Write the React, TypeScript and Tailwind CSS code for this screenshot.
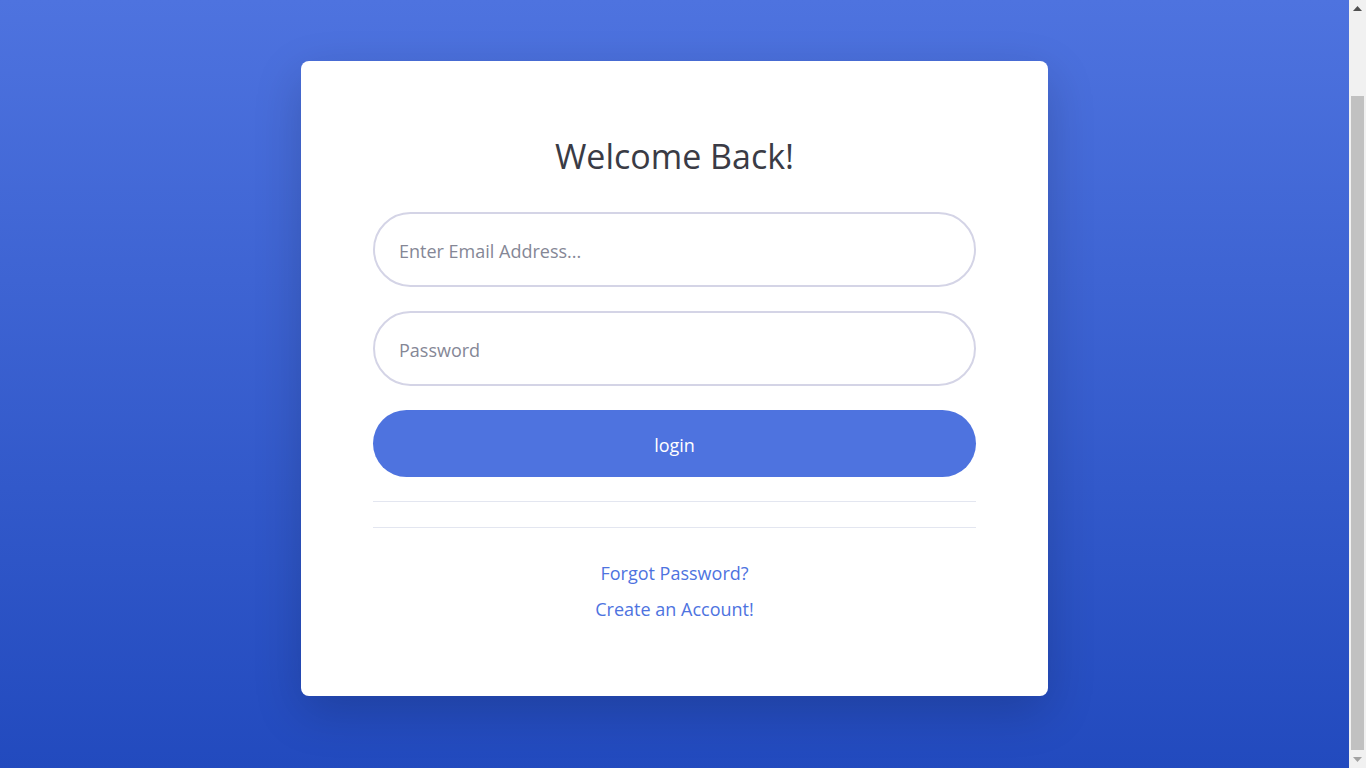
import React from "react";

function FakeScrollbar() {
  return (
    <div className="flex w-[17px] shrink-0 flex-col bg-[#f1f1f1]">
      <div className="flex h-[17px] items-center justify-center">
        <svg width="9" height="5" viewBox="0 0 9 5">
          <polygon points="0,5 4.5,0 9,5" fill="#505050" />
        </svg>
      </div>
      <div className="flex-1 pt-[79px] pb-[1px] px-[2px]">
        <div className="h-full w-full bg-[#c1c1c1]" />
      </div>
      <div className="flex h-[17px] items-center justify-center">
        <svg width="9" height="5" viewBox="0 0 9 5">
          <polygon points="0,0 4.5,5 9,0" fill="#a3a3a3" />
        </svg>
      </div>
    </div>
  );
}

export default function App() {
  return (
    <div
      className="flex h-screen overflow-hidden"
      style={{ fontFamily: '"Open Sans", "Noto Sans", sans-serif' }}
    >
      <main className="flex-1 bg-[linear-gradient(180deg,#4e73df_0%,#224abe_100%)] pt-[61px]">
        <div className="mx-auto w-[747px] h-[635px] rounded-lg bg-white shadow-[0_1rem_3rem_rgba(0,0,0,0.175)] px-[72px] pt-[74px]">
          <h1 className="text-center text-[34px] leading-[42px] text-[#3a3b45] font-normal">
            Welcome Back!
          </h1>
          <form className="mt-[35px] flex flex-col gap-6" onSubmit={(e) => e.preventDefault()}>
            <input
              type="email"
              placeholder="Enter Email Address..."
              className="h-[75px] w-full rounded-full border-2 border-[#d4d4e6] pl-[24px] pr-[24px] pt-[3px] text-[18px] text-[#6e707e] placeholder:text-[#858796] outline-none"
            />
            <input
              type="password"
              placeholder="Password"
              className="h-[75px] w-full rounded-full border-2 border-[#d4d4e6] pl-[24px] pr-[24px] pt-[3px] text-[18px] text-[#6e707e] placeholder:text-[#858796] outline-none"
            />
            <button
              type="submit"
              className="h-[67px] w-full rounded-full bg-[#4e73df] pt-[3px] text-[18px] text-white"
            >
              login
            </button>
          </form>
          <hr className="mt-6 border-t border-[#e3e6f0]" />
          <hr className="mt-[25px] border-t border-[#e3e6f0]" />
          <div className="mt-[33px] text-center text-[18px] leading-[24px]">
            <a href="#" className="text-[#4e73df]">Forgot Password?</a>
          </div>
          <div className="mt-[12px] text-center text-[18px] leading-[24px]">
            <a href="#" className="text-[#4e73df]">Create an Account!</a>
          </div>
        </div>
      </main>
      <FakeScrollbar />
    </div>
  );
}
